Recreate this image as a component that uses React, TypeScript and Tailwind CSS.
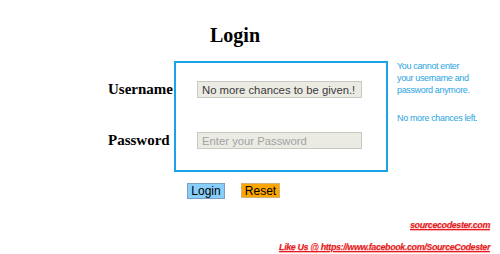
export default function App() {
  return (
    <div className="w-[500px] h-[254px] overflow-hidden bg-white font-['Liberation_Serif',serif] text-black">
      <h1 className="mt-[25px] pl-[210px] text-[20px] font-bold leading-[20px]">Login</h1>

      <div className="mt-[16px] flex items-start">
        <div className="ml-[108px] flex w-[66px] flex-col gap-[34px] pt-[20px] text-[15px] font-bold leading-[17px]">
          <label>Username</label>
          <label>Password</label>
        </div>

        <div className="flex h-[111px] w-[214px] flex-col gap-[34px] border-2 border-[#1aa3e8] pl-[21px] pt-[18px]">
          <input
            disabled
            value="No more chances to be given.!"
            readOnly
            className="h-[17px] w-[165px] border border-[#c9c9c4] bg-[#ebebe4] pl-[4px] pr-0 font-['Liberation_Sans',sans-serif] text-[11.3px] text-[#3a3a3a] outline-none"
          />
          <input
            disabled
            type="password"
            placeholder="Enter your Password"
            className="h-[17px] w-[165px] border border-[#c9c9c4] bg-[#ebebe4] pl-[4px] pr-0 font-['Liberation_Sans',sans-serif] text-[11.3px] text-[#3a3a3a] outline-none placeholder:text-[#a3a3a3]"
          />
        </div>

        <div className="-mt-px ml-[9px] font-['Liberation_Sans',sans-serif] text-[9px] leading-[12px] tracking-[-0.35px] text-[#2aa4e2]">
          <p>You cannot enter</p>
          <p>your username and</p>
          <p>password anymore.</p>
          <p className="mt-[16px]">No more chances left.</p>
        </div>
      </div>

      <div className="mt-[11px] flex items-start gap-[16px] pl-[187px] font-['Liberation_Sans',sans-serif] text-[12px] leading-none">
        <button className="h-[16px] w-[38px] border border-[#7d9fc4] bg-[#87cefa] text-black">Login</button>
        <button className="h-[15px] w-[39px] border border-[#d0b27a] bg-[#ffa500] text-black">Reset</button>
      </div>

      <div className="mt-[21px] flex flex-col items-end gap-[12px] pr-[10px] font-['Liberation_Sans',sans-serif] text-[9px] font-bold italic leading-[10px] tracking-[-0.42px] text-[#e31b23] [text-shadow:0_1px_1px_rgba(255,60,60,0.4)]">
        <a className="underline">sourcecodester.com</a>
        <a className="underline">Like Us @ https://www.facebook.com/SourceCodester</a>
      </div>
    </div>
  );
}
